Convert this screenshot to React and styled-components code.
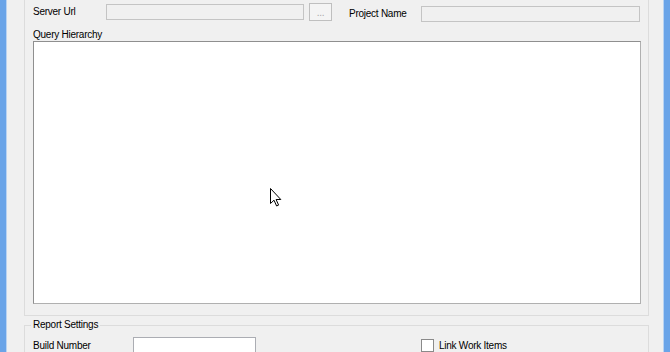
import React from "react";
import styled, { createGlobalStyle } from "styled-components";

const Global = createGlobalStyle`
  html, body { margin: 0; padding: 0; overflow: hidden; background: #f0f0f0; }
  * { box-sizing: border-box; }
`;

const Frame = styled.div`
  position: relative;
  display: flex;
  width: 670px;
  height: 352px;
  overflow: hidden;
  background: #f0f0f0;
  font-family: "Liberation Sans", Arial, sans-serif;
  font-size: 10px;
  letter-spacing: -0.25px;
  color: #000;
`;

const Edge = styled.div`
  flex: 0 0 7px;
  background: #6aa4e8;
  ${(p) =>
    p.$side === "left"
      ? "box-shadow: inset -1px 0 0 #b9d3f2;"
      : "box-shadow: inset 1px 0 0 #b9d3f2;"}
`;

const Client = styled.div`
  flex: 1;
  display: flex;
  flex-direction: column;
  padding: 0 14px 0 17px;
  background: #f0f0f0;
`;

const TopGroup = styled.div`
  display: flex;
  flex-direction: column;
  border: 1px solid #dcdcdc;
  border-top: none;
  padding: 3px 7px 11px 8px;
`;

const Row = styled.div`
  display: flex;
  align-items: flex-start;
  height: 18px;
`;

const Label = styled.span`
  flex: 0 0 ${(p) => p.$w}px;
  margin-top: ${(p) => p.$top || 0}px;
  line-height: 12px;
  white-space: nowrap;
`;

const TextBox = styled.div`
  flex: 0 0 ${(p) => p.$w}px;
  height: 16px;
  margin-top: ${(p) => p.$top || 0}px;
  border: 1px solid ${(p) => (p.$disabled ? "#c4c4c4" : "#abadb3")};
  background: ${(p) => (p.$disabled ? "#f0f0f0" : "#ffffff")};
`;

const BrowseButton = styled.div`
  flex: 0 0 23px;
  height: 18px;
  margin-left: 5px;
  margin-right: 17px;
  border: 1px solid #bfbfbf;
  background: #f4f4f4;
  color: #a8a8a8;
  font-size: 10px;
  line-height: 17px;
  text-align: center;
`;

const SectionLabel = styled.div`
  margin-top: 8px;
  line-height: 12px;
  height: 12px;
`;

const Tree = styled.div`
  position: relative;
  height: 263px;
  border: 1px solid #8f8f8f;
  border-right-color: #b0b0b0;
  border-bottom-color: #b0b0b0;
  background: #ffffff;
`;

const Fieldset = styled.fieldset`
  margin: 3px 0 0 0;
  padding: 6px 7px 4px 8px;
  border: 1px solid #dcdcdc;
  min-width: 0;
`;

const Legend = styled.legend`
  padding: 0 2px;
  margin-left: -2px;
  line-height: 12px;
  font-size: 10px;
`;

const SettingsRow = styled.div`
  display: flex;
  align-items: flex-start;
`;

const Check = styled.label`
  display: flex;
  align-items: center;
  gap: 5px;
  margin-left: 165px;
  margin-top: 2px;
  line-height: 13px;
  white-space: nowrap;
`;

const Box = styled.span`
  width: 13px;
  height: 13px;
  border: 1px solid #8a8a8a;
  background: #fff;
`;

const Cursor = styled.svg`
  position: absolute;
  left: 270px;
  top: 188px;
`;

export default function App() {
  return (
    <Frame>
      <Global />
      <Edge $side="left" />
      <Client>
        <TopGroup>
          <Row>
            <Label $w={73} $top={3}>Server Url</Label>
            <TextBox $w={198} $top={1} $disabled />
            <BrowseButton>...</BrowseButton>
            <Label $w={72} $top={5}>Project Name</Label>
            <TextBox $w={219} $top={3} $disabled />
          </Row>
          <SectionLabel>Query Hierarchy</SectionLabel>
          <Tree />
        </TopGroup>
        <Fieldset>
          <Legend>Report Settings</Legend>
          <SettingsRow>
            <Label $w={100} $top={3}>Build Number</Label>
            <TextBox $w={123} />
            <Check>
              <Box />
              Link Work Items
            </Check>
          </SettingsRow>
        </Fieldset>
      </Client>
      <Edge $side="right" />
      <Cursor width="12" height="19" viewBox="0 0 12 19">
        <path
          d="M0.5 0.5 L0.5 15.5 L4 12.2 L6.6 18 L8.6 17.1 L6.1 11.5 L10.8 11.5 Z"
          fill="#ffffff"
          stroke="#000000"
          strokeWidth="1"
          strokeLinejoin="miter"
        />
      </Cursor>
    </Frame>
  );
}
